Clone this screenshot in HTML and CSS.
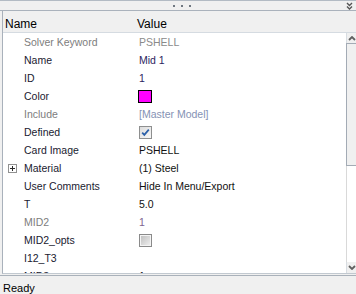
FILE: index.html
```html
<!DOCTYPE html>
<html lang="en">
<head>
    <meta charset="UTF-8">
    <title>Entity Editor</title>
    <link rel="stylesheet" href="styles.css">
</head>
<body>
    <div class="topbar">
        <span></span>
        <div class="grip"><i></i><i></i><i></i></div>
        <svg class="collapse" width="7" height="8" viewBox="0 0 7 8">
            <polyline points="1,1 3.5,3.5 6,1" fill="none" stroke="#555" stroke-width="1.4"/>
            <polyline points="1,4.5 3.5,7 6,4.5" fill="none" stroke="#555" stroke-width="1.4"/>
        </svg>
    </div>

    <div class="frame">
        <div class="grid-head">
            <span class="head-name">Name</span>
            <span class="head-value">Value</span>
        </div>

        <div class="grid-body">
            <div class="rows">
                <div class="row off">
                    <span class="key">Solver Keyword</span>
                    <span class="val">PSHELL</span>
                </div>
                <div class="row">
                    <span class="key">Name</span>
                    <span class="val edit">Mid 1</span>
                </div>
                <div class="row">
                    <span class="key">ID</span>
                    <span class="val edit">1</span>
                </div>
                <div class="row">
                    <span class="key">Color</span>
                    <span class="val"><span class="swatch"></span></span>
                </div>
                <div class="row off">
                    <span class="key">Include</span>
                    <span class="val link">[Master Model]</span>
                </div>
                <div class="row">
                    <span class="key">Defined</span>
                    <span class="val">
                        <span class="check">
                            <svg width="11" height="11" viewBox="0 0 11 11">
                                <polyline points="2.2,5.6 4.3,7.9 8.8,2.6" fill="none" stroke="#2a5fa8" stroke-width="1.7"/>
                            </svg>
                        </span>
                    </span>
                </div>
                <div class="row">
                    <span class="key">Card Image</span>
                    <span class="val">PSHELL</span>
                </div>
                <div class="row">
                    <span class="key has-exp">
                        <svg class="expander" width="9" height="9" viewBox="0 0 9 9">
                            <rect x="0.5" y="0.5" width="8" height="8" fill="#fff" stroke="#919191"/>
                            <path d="M2 4.5h5M4.5 2v5" stroke="#2a2a2a"/>
                        </svg>
                        Material
                    </span>
                    <span class="val">(1) Steel</span>
                </div>
                <div class="row">
                    <span class="key">User Comments</span>
                    <span class="val">Hide In Menu/Export</span>
                </div>
                <div class="row">
                    <span class="key">T</span>
                    <span class="val">5.0</span>
                </div>
                <div class="row off">
                    <span class="key">MID2</span>
                    <span class="val ref">1</span>
                </div>
                <div class="row">
                    <span class="key">MID2_opts</span>
                    <span class="val"><span class="check empty"></span></span>
                </div>
                <div class="row">
                    <span class="key">I12_T3</span>
                    <span class="val"></span>
                </div>
                <div class="row">
                    <span class="key">MID3</span>
                    <span class="val">1</span>
                </div>
            </div>

            <div class="scrollbar">
                <div class="sb-btn sb-up">
                    <svg width="8" height="5" viewBox="0 0 8 5">
                        <polyline points="1,4 4,1 7,4" fill="none" stroke="#606060" stroke-width="1.8"/>
                    </svg>
                </div>
                <div class="sb-thumb"></div>
                <div class="sb-track"></div>
                <div class="sb-btn sb-down">
                    <svg width="8" height="5" viewBox="0 0 8 5">
                        <polyline points="1,1 4,4 7,1" fill="none" stroke="#606060" stroke-width="1.8"/>
                    </svg>
                </div>
            </div>
        </div>
    </div>

    <div class="status">Ready</div>
</body>
</html>
```

FILE: styles.css
```css
/* Reset */
* {
    margin: 0;
    padding: 0;
    box-sizing: border-box;
}

body {
    width: 356px;
    height: 294px;
    overflow: hidden;
    background-color: #f0f0f0;
    font-family: 'Liberation Sans', Arial, sans-serif;
    color: #1a1a30;
}

/* Dock strip with grip and collapse arrow */
.topbar {
    height: 11px;
    display: grid;
    grid-template-columns: 1fr auto 1fr;
    align-items: center;
    border-top: 1px solid #b3bbc4;
    border-bottom: 1px solid #aab2bc;
}

.grip {
    display: flex;
    gap: 6px;
    margin-left: 8px;
}

.grip i {
    width: 2px;
    height: 2px;
    background-color: #6f7780;
}

.collapse {
    justify-self: end;
    margin-right: 3px;
}

/* Property grid frame */
.frame {
    margin-left: 2px;
    border-left: 1px solid #a9b1bb;
    border-bottom: 1px solid #c2c9d0;
}

.grid-head {
    height: 22px;
    display: grid;
    grid-template-columns: 134px 1fr;
    padding-top: 5px;
    font-size: 12px;
    line-height: 16px;
    color: #000;
    border-bottom: 1px solid #d5dbe1;
}

.head-name {
    padding-left: 2px;
}

.grid-body {
    height: 240px;
    display: flex;
}

.rows {
    flex: 1;
    background-color: #fff;
    overflow: hidden;
}

.row {
    height: 18px;
    display: grid;
    grid-template-columns: 136px 1fr;
    font-size: 10.5px;
    line-height: 18px;
    white-space: nowrap;
}

.key {
    padding-left: 21px;
}

.key.has-exp {
    display: flex;
    align-items: center;
    padding-left: 5px;
}

.expander {
    margin-right: 7px;
}

.val {
    display: flex;
    align-items: center;
    color: #111;
}

.val.edit {
    color: #2c1e5e;
}

.row.off .key {
    color: #7d7d7d;
}

.row.off .val {
    color: #8a8a8a;
}

.row.off .val.link {
    color: #8592b4;
}

.row.off .val.ref {
    color: #7e6490;
}

.swatch {
    width: 14px;
    height: 13px;
    border: 1px solid #000;
    background-color: #ff00ff;
    margin-left: -1px;
}

.check {
    width: 13px;
    height: 13px;
    display: flex;
    align-items: center;
    justify-content: center;
    border: 1px solid #8e8f8f;
    background: linear-gradient(135deg, #dcdcdc, #f7f7f7);
}

.check.empty {
    border-color: #8a8a8a;
    box-shadow: inset 0 0 0 1px #f4f4f4;
    background: linear-gradient(135deg, #bcbcbc, #f2f2f2);
}

/* Scrollbar, clipped by the window edge */
.scrollbar {
    width: 10px;
    display: flex;
    flex-direction: column;
}

.sb-btn {
    display: flex;
    align-items: center;
    justify-content: center;
    background-color: #f0f0f0;
    border-left: 1px solid #d8dde2;
}

.sb-up {
    height: 10px;
    padding-top: 1px;
}

.sb-thumb {
    height: 123px;
    background-color: #f0f0f0;
    border-left: 1px solid #a3abb5;
    border-top: 1px solid #a3abb5;
    border-bottom: 1px solid #a3abb5;
}

.sb-track {
    flex: 1;
    background-color: #fff;
    border-left: 1px solid #d9d9d9;
}

.sb-down {
    height: 11px;
}

/* Status bar */
.status {
    margin-top: 1px;
    height: 19px;
    border-top: 1px solid #a9b1ba;
    padding: 6px 0 0 3px;
    font-size: 11px;
    line-height: 13px;
    color: #000;
}
```
